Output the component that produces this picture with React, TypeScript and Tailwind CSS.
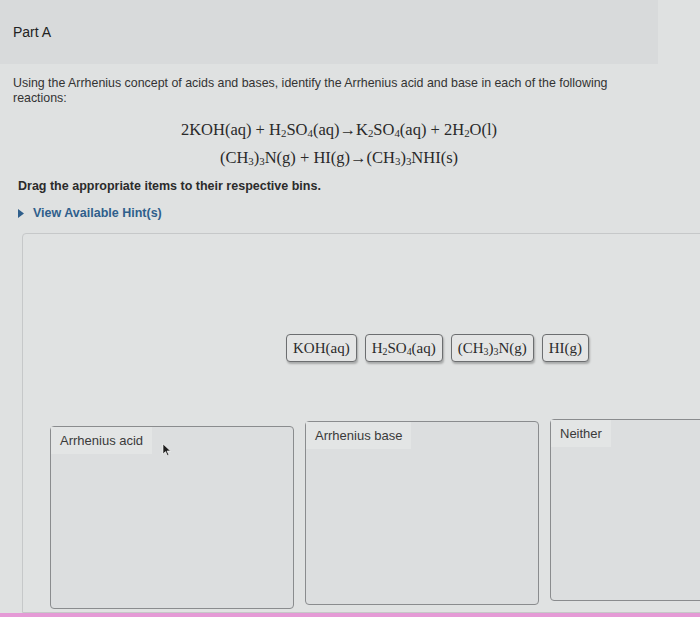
import React from "react";

const S = ({ children }: { children: React.ReactNode }) => (
  <span className="text-[0.66em] align-[-0.22em] leading-none">{children}</span>
);

const Chip = ({ children }: { children: React.ReactNode }) => (
  <div className="h-[28px] px-[6px] flex items-center rounded-[4px] border-[1.5px] border-[#6c6e70] bg-[#e4e5e5] shadow-[1px_2px_2px_rgba(0,0,0,0.25)] font-['Liberation_Serif',serif] text-[15px] text-[#2b2b2b]">
    <span className="leading-[18px]">{children}</span>
  </div>
);

const Bin = ({ label, className }: { label: string; className: string }) => (
  <div className={`border-[1.5px] border-[#8a8c8e] rounded-[4px] bg-[#dcdedf] ${className}`}>
    <div className="inline-block bg-[#e3e5e5] px-[9px] pt-[4px] pb-[3px] text-[13px] text-[#3a3a3a] font-['Liberation_Sans',sans-serif]">
      {label}
    </div>
  </div>
);

export default function App() {
  return (
    <div className="w-[700px] h-[617px] overflow-hidden bg-[#dfe1e1] text-[#2e2e2e] font-['Liberation_Sans',Arial,sans-serif] flex flex-col">
      <div className="h-[64px] mr-[42px] bg-[#d8dadb] flex items-center pl-[13px] text-[14px] text-[#222]">
        Part A
      </div>
      <p className="mt-[12px] px-[13px] pr-[80px] text-[12.4px] leading-[15px] text-[#333]">
        Using the Arrhenius concept of acids and bases, identify the Arrhenius acid and base in each of the following reactions:
      </p>
      <div className="mt-[10px] pr-[22px] flex flex-col items-center font-['Liberation_Serif',serif] text-[16.5px] leading-[28px] text-[#2a2a2a]">
        <div>
          2KOH(aq) + H<S>2</S>SO<S>4</S>(aq)→K<S>2</S>SO<S>4</S>(aq) + 2H<S>2</S>O(l)
        </div>
        <div>
          (CH<S>3</S>)<S>3</S>N(g) + HI(g)→(CH<S>3</S>)<S>3</S>NHI(s)
        </div>
      </div>
      <div className="mt-[6px] pl-[18px] text-[12.5px] font-bold text-[#2b2b2b] leading-[16px]">
        Drag the appropriate items to their respective bins.
      </div>
      <div className="mt-[11px] pl-[18px] flex items-center gap-[9px] text-[12.5px] font-bold text-[#2f5f8c] leading-[16px]">
        <svg width="6" height="9" viewBox="0 0 6 9"><path d="M0 0 L6 4.5 L0 9 Z" fill="#2f5f8c" /></svg>
        <span>View Available Hint(s)</span>
      </div>
      <div className="mt-[12px] ml-[22px] mr-[-10px] h-[380px] border border-[#c6c8c9] rounded-tl-[4px] bg-[#e0e2e2] flex flex-col">
        <div className="mt-[100px] pl-[263px] flex gap-[8px]">
          <Chip>KOH(aq)</Chip>
          <Chip>
            H<S>2</S>SO<S>4</S>(aq)
          </Chip>
          <Chip>
            (CH<S>3</S>)<S>3</S>N(g)
          </Chip>
          <Chip>HI(g)</Chip>
        </div>
        <div className="mt-[58px] pl-[27px] flex items-start gap-[11px]">
          <div className="relative mt-[6px]">
            <Bin label="Arrhenius acid" className="w-[244px] h-[183px]" />
            <svg className="absolute left-[112px] top-[17px]" width="10" height="14" viewBox="0 0 10 14">
              <path d="M1 1 L1 11 L3.5 8.6 L5.4 12.6 L6.9 11.9 L5 8 L8.5 8 Z" fill="#1e1e1e" stroke="#ffffff" strokeWidth="0.6" />
            </svg>
          </div>
          <div className="mt-[1px]">
            <Bin label="Arrhenius base" className="w-[234px] h-[184px]" />
          </div>
          <div className="mt-[-1px]">
            <Bin label="Neither" className="w-[170px] h-[182px]" />
          </div>
        </div>
      </div>
      <div className="flex-1 bg-[#e59ad6]" />
    </div>
  );
}
